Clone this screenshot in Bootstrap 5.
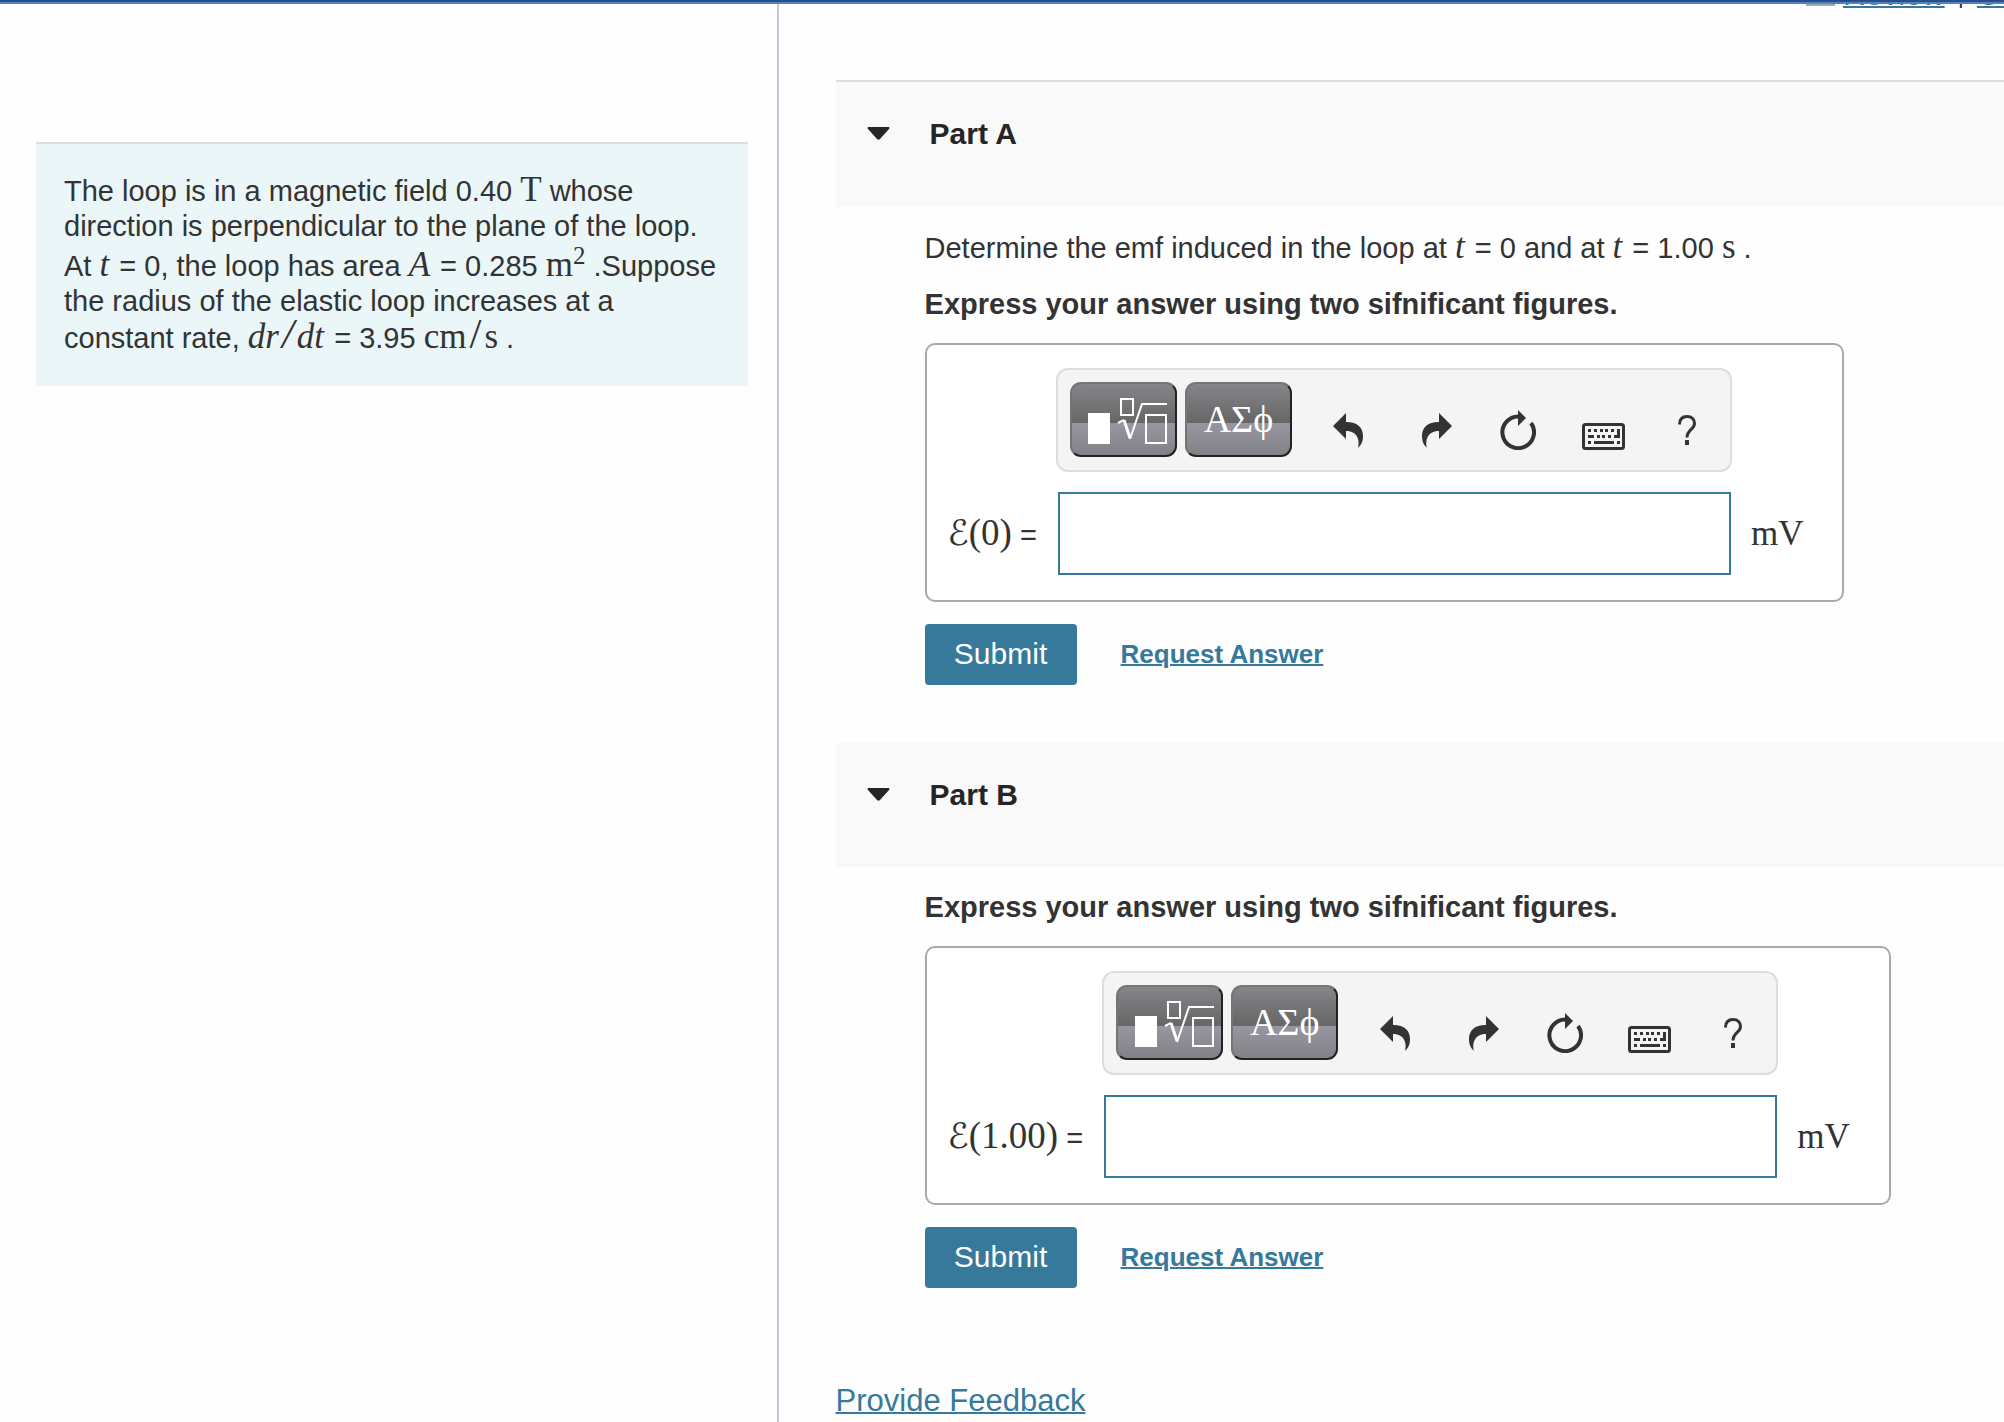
<!DOCTYPE html>
<html lang="en">
<head>
<meta charset="utf-8">
<meta name="viewport" content="width=device-width, initial-scale=1">
<title>Induced emf in an elastic loop</title>
<link href="https://cdn.jsdelivr.net/npm/bootstrap@5.3.0/dist/css/bootstrap.min.css" rel="stylesheet">
<script src="https://cdn.jsdelivr.net/npm/bootstrap@5.3.0/dist/js/bootstrap.bundle.min.js"></script>
<style>
  body { font-family: "Liberation Sans", Arial, sans-serif; font-size: 29px; line-height: 35px; color: #333; background: #fefefe; }
  a { color: #36799b; text-decoration-thickness: 2px; }
  .top-rule { height: 4px; background: linear-gradient(#264f93 50%, #5b80b8 50%); }
  .problem-pane { width: 38.85%; border-right: 2px solid #bfcbdd; padding: 138px 29px 0 36px; }
  .problem-box { background: #eaf6f8; border-top: 2px solid #d8dfde; padding: 28px 20px 30px 28px; }
  .parts-pane { padding-left: 57px; min-width: 0; }
  .links-strip { height: 76px; }
  .links-clip { width: 198px; height: 12px; overflow: hidden; white-space: nowrap; font-size: 31px; }
  .links-inner { margin-top: -27px; gap: 8px; }
  .links-inner svg { margin-top: 1px; }
  .divider { font-size: 24px; padding: 0 5px; }
  .math { font-family: "Liberation Serif", "DejaVu Serif", serif; font-size: 35px; line-height: 35px; }
  i.math { padding-right: 2px; }
  .math sup { font-size: 25px; line-height: 24px; top: 0; vertical-align: 12px; }
  .slash { font-size: 43px; line-height: 0; padding: 0 3px; }
  .part-head { background: #f9f9f9; min-height: 124px; padding: 34px 31px 0; gap: 40px; }
  .first-part { border-top: 2px solid #ddd; min-height: 127px; }
  .part-head h2 { font-size: 30px; line-height: 35px; font-weight: 700; color: #252525; }
  .toggle { width: 23px; height: 35px; border: 0; background: none; padding: 0; color: #252525; }
  .part-body { padding-left: 89px; }
  .question { padding-top: 22px; }
  .instruction { padding: 21px 0; }
  .second { margin-top: 58px; }
  .second .instruction { padding-top: 23px; }
  .answer-box { width: fit-content; grid-template-columns: auto auto auto; column-gap: 19px; row-gap: 20px; border: 2px solid #a9a9a9; border-radius: 10px; padding: 23px 39px 25px 21px; background: #fff; align-items: center; }
  .answer-box label { grid-column: 1; }
  .answer-box label .math { font-size: 37px; }
  .toolbar { grid-column: 2; width: 676px; height: 104px; background: #f4f4f4; border: 2px solid #ddd; border-radius: 12px; padding: 12px; }
  .sym { width: 107px; height: 75px; border: 2px solid; border-color: #757575 #222 #222 #757575; border-radius: 11px; color: #fff; background: linear-gradient(#85858a, #666 55%, #9896a0 55%, #828187); padding: 0; }
  .sym + .sym { margin-left: 8px; }
  .sym-greek { font-family: "Liberation Serif", "DejaVu Serif", serif; font-size: 38px; }
  .tools { margin-left: 14px; padding-top: 20px; }
  .tool { width: 85px; border: 0; background: none; padding: 0; color: #333; line-height: 0; }
  .tool:last-child { width: 72px; }
  .value-field { width: 673px; height: 83px; margin-left: 2px; border: 2px solid #36799b; border-radius: 0; font-size: 35px; }
  .script-e { font-family: "DejaVu Serif", "DejaVu Sans", serif; font-size: 35px; line-height: 0; }
  .submit { background: #36799b; border: 0; color: #fff; font-size: 30px; line-height: 35px; width: 152px; height: 61px; border-radius: 4px; padding: 0 0 2px; }
  .request { font-size: 26px; font-weight: 700; }
  .actions { gap: 44px; margin-top: 22px; }
  .feedback { font-size: 31px; margin-top: 95px; }
</style>
</head>
<body>
<svg class="d-none" xmlns="http://www.w3.org/2000/svg">
  <symbol id="i-templates" viewBox="0 0 102 71">
    <rect x="16" y="29" width="22" height="31" fill="#fff"/>
    <g fill="none" stroke="#fff" stroke-width="2">
      <rect x="49" y="15" width="12" height="16"/>
      <rect x="74" y="31" width="20" height="28"/>
      <path d="M46 39l6-3" />
      <path d="M52 36l6 18" stroke-width="3"/>
      <path d="M58 55L70 20h25"/>
    </g>
  </symbol>
  <symbol id="i-undo" viewBox="0 0 30 35"><path fill="currentColor" d="M0 13L13 0v9c12 0 17 6 17 14 0 6-2 9-5 12 2-7 0-17-12-17v8z"/></symbol>
  <symbol id="i-redo" viewBox="-8 0 38 35"><path fill="currentColor" d="M30 13L17 0v9C5 9 0 15 0 23c0 6 2 9 5 12-2-7 0-17 12-17v8z"/></symbol>
  <symbol id="i-reset" viewBox="0 0 36 40"><path fill="none" stroke="currentColor" stroke-width="4" d="M19 6.500A15.800 15.800 0 1 0 31 13"/><path fill="currentColor" d="M18 0l8 8-8 8z"/></symbol>
  <symbol id="i-keys" viewBox="0 -12 43 39">
    <rect x="1.500" y="1.500" width="40" height="24" rx="2" fill="none" stroke="currentColor" stroke-width="3"/>
    <path fill="currentColor" d="M6 6h3v3H6zm6 0h3v3h-3zm6 0h3v3h-3zm5 0h3v3h-3zm6 0h3v3h-3zm6 0h3v9h-6v-3h3zM6 12h6v3H6zm9 0h3v3h-3zm5 0h3v3h-3zm6 0h3v3h-3zM6 18h3v3H6zm6 0h20v3H12zm23 0h3v3h-3z"/>
  </symbol>
  <symbol id="i-help" viewBox="-10 0 28 30"><path fill="none" stroke="currentColor" stroke-width="3" d="M1.500 9.500C1.500 4 4 1.500 9 1.500s7.500 3 7.500 7c0 6-7.500 6-7.500 14"/><path fill="currentColor" d="M7 25h4v5H7z"/></symbol>
  <symbol id="i-down" viewBox="0 0 23 13"><path fill="currentColor" d="M1 0h21q1 1 0 2L13 12q-1.500 1.500-3 0L1 2Q0 1 1 0z"/></symbol>
</svg>

<div class="min-vh-100 d-flex flex-column">
  <div class="top-rule"></div>
  <div class="d-flex flex-grow-1">
    <aside class="problem-pane flex-shrink-0">
      <div class="problem-box">
        The loop is in a magnetic field 0.40 <span class="math">T</span> whose<br>
        direction is perpendicular to the plane of the loop.<br>
        At <i class="math">t</i> = 0, the loop has area <i class="math">A</i> = 0.285 <span class="math">m<sup>2</sup></span> .Suppose<br>
        the radius of the elastic loop increases at a<br>
        constant rate, <i class="math">dr<span class="slash">/</span>dt</i> = 3.95 <span class="math">cm<span class="slash">/</span>s</span> .
      </div>
    </aside>

    <main class="parts-pane flex-grow-1">
      <div class="links-strip d-flex justify-content-end">
        <nav class="links-clip" aria-label="Resources">
          <div class="links-inner d-flex">
            <svg width="29" height="28" viewBox="0 0 29 28" class="flex-shrink-0"><path d="M0 0h29v28H0z" fill="#8fb0bd"/></svg>
            <a href="#">Review</a><span class="divider">|</span><a href="#">Constants</a>
          </div>
        </nav>
      </div>

      <section>
        <div class="part-head first-part d-flex">
          <button class="toggle d-flex" aria-label="Collapse Part A"><svg class="m-auto" width="23" height="13"><use href="#i-down"/></svg></button>
          <h2 class="mb-0">Part A</h2>
        </div>
        <div class="part-body">
          <p class="question mb-0">Determine the emf induced in the loop at <i class="math">t</i> = 0 and at <i class="math">t</i> = 1.00 <span class="math">s</span> .</p>
          <p class="instruction fw-bold mb-0">Express your answer using two sifnificant figures.</p>
          <div class="answer-box d-grid">
            <div class="toolbar d-flex">
              <button class="sym" aria-label="Templates"><svg width="102" height="71"><use href="#i-templates"/></svg></button>
              <button class="sym sym-greek">ΑΣϕ</button>
              <div class="tools d-flex align-items-center">
                <button class="tool" aria-label="Undo"><svg width="30" height="35"><use href="#i-undo"/></svg></button>
                <button class="tool" aria-label="Redo"><svg width="38" height="35"><use href="#i-redo"/></svg></button>
                <button class="tool" aria-label="Reset"><svg width="36" height="40"><use href="#i-reset"/></svg></button>
                <button class="tool" aria-label="Keyboard shortcuts"><svg width="43" height="39"><use href="#i-keys"/></svg></button>
                <button class="tool" aria-label="Help"><svg width="28" height="30"><use href="#i-help"/></svg></button>
              </div>
            </div>
            <label for="emf-a" class="text-nowrap"><span class="math"><span class="script-e">ℰ</span>(0)</span> =</label>
            <input id="emf-a" type="text" class="form-control value-field">
            <span class="math">mV</span>
          </div>
          <div class="actions d-flex align-items-center">
            <button class="submit btn">Submit</button>
            <a href="#" class="request">Request Answer</a>
          </div>
        </div>
      </section>

      <section class="second">
        <div class="part-head d-flex">
          <button class="toggle d-flex" aria-label="Collapse Part B"><svg class="m-auto" width="23" height="13"><use href="#i-down"/></svg></button>
          <h2 class="mb-0">Part B</h2>
        </div>
        <div class="part-body">
          <p class="instruction fw-bold mb-0">Express your answer using two sifnificant figures.</p>
          <div class="answer-box d-grid">
            <div class="toolbar d-flex">
              <button class="sym" aria-label="Templates"><svg width="102" height="71"><use href="#i-templates"/></svg></button>
              <button class="sym sym-greek">ΑΣϕ</button>
              <div class="tools d-flex align-items-center">
                <button class="tool" aria-label="Undo"><svg width="30" height="35"><use href="#i-undo"/></svg></button>
                <button class="tool" aria-label="Redo"><svg width="38" height="35"><use href="#i-redo"/></svg></button>
                <button class="tool" aria-label="Reset"><svg width="36" height="40"><use href="#i-reset"/></svg></button>
                <button class="tool" aria-label="Keyboard shortcuts"><svg width="43" height="39"><use href="#i-keys"/></svg></button>
                <button class="tool" aria-label="Help"><svg width="28" height="30"><use href="#i-help"/></svg></button>
              </div>
            </div>
            <label for="emf-b" class="text-nowrap"><span class="math"><span class="script-e">ℰ</span>(1.00)</span> =</label>
            <input id="emf-b" type="text" class="form-control value-field">
            <span class="math">mV</span>
          </div>
          <div class="actions d-flex align-items-center">
            <button class="submit btn">Submit</button>
            <a href="#" class="request">Request Answer</a>
          </div>
        </div>
      </section>
      <a href="#" class="feedback d-inline-block">Provide Feedback</a>
    </main>
  </div>
</div>
</body>
</html>
